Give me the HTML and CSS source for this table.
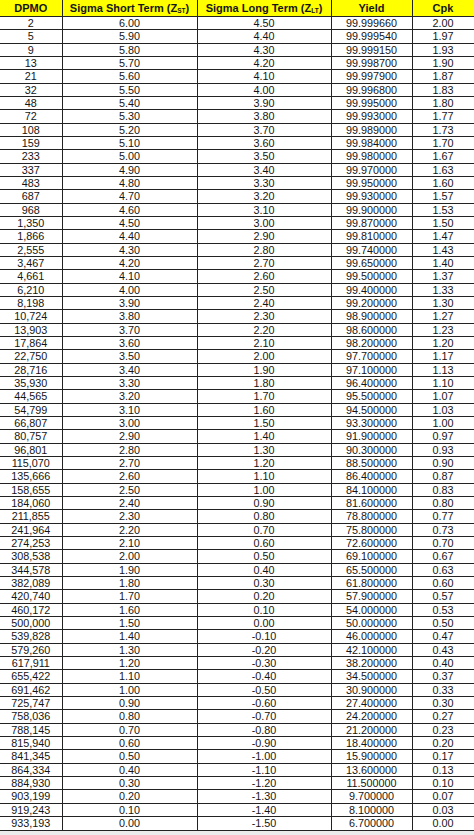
FILE: index.html
```html
<!DOCTYPE html>
<html>
<head>
<meta charset="utf-8">
<link rel="stylesheet" href="styles.css">
</head>
<body>
<table class="sigma">
<colgroup>
<col class="c-dpmo"><col class="c-st"><col class="c-lt"><col class="c-yield"><col class="c-cpk">
</colgroup>
<thead>
<tr><th>DPMO</th><th>Sigma Short Term (Z<sub>ST</sub>)</th><th>Sigma Long Term (Z<sub>LT</sub>)</th><th>Yield</th><th>Cpk</th></tr>
</thead>
<tbody>
<tr><td>2</td><td>6.00</td><td>4.50</td><td>99.999660</td><td>2.00</td></tr>
<tr><td>5</td><td>5.90</td><td>4.40</td><td>99.999540</td><td>1.97</td></tr>
<tr><td>9</td><td>5.80</td><td>4.30</td><td>99.999150</td><td>1.93</td></tr>
<tr><td>13</td><td>5.70</td><td>4.20</td><td>99.998700</td><td>1.90</td></tr>
<tr><td>21</td><td>5.60</td><td>4.10</td><td>99.997900</td><td>1.87</td></tr>
<tr><td>32</td><td>5.50</td><td>4.00</td><td>99.996800</td><td>1.83</td></tr>
<tr><td>48</td><td>5.40</td><td>3.90</td><td>99.995000</td><td>1.80</td></tr>
<tr><td>72</td><td>5.30</td><td>3.80</td><td>99.993000</td><td>1.77</td></tr>
<tr><td>108</td><td>5.20</td><td>3.70</td><td>99.989000</td><td>1.73</td></tr>
<tr><td>159</td><td>5.10</td><td>3.60</td><td>99.984000</td><td>1.70</td></tr>
<tr><td>233</td><td>5.00</td><td>3.50</td><td>99.980000</td><td>1.67</td></tr>
<tr><td>337</td><td>4.90</td><td>3.40</td><td>99.970000</td><td>1.63</td></tr>
<tr><td>483</td><td>4.80</td><td>3.30</td><td>99.950000</td><td>1.60</td></tr>
<tr><td>687</td><td>4.70</td><td>3.20</td><td>99.930000</td><td>1.57</td></tr>
<tr><td>968</td><td>4.60</td><td>3.10</td><td>99.900000</td><td>1.53</td></tr>
<tr><td>1,350</td><td>4.50</td><td>3.00</td><td>99.870000</td><td>1.50</td></tr>
<tr><td>1,866</td><td>4.40</td><td>2.90</td><td>99.810000</td><td>1.47</td></tr>
<tr><td>2,555</td><td>4.30</td><td>2.80</td><td>99.740000</td><td>1.43</td></tr>
<tr><td>3,467</td><td>4.20</td><td>2.70</td><td>99.650000</td><td>1.40</td></tr>
<tr><td>4,661</td><td>4.10</td><td>2.60</td><td>99.500000</td><td>1.37</td></tr>
<tr><td>6,210</td><td>4.00</td><td>2.50</td><td>99.400000</td><td>1.33</td></tr>
<tr><td>8,198</td><td>3.90</td><td>2.40</td><td>99.200000</td><td>1.30</td></tr>
<tr><td>10,724</td><td>3.80</td><td>2.30</td><td>98.900000</td><td>1.27</td></tr>
<tr><td>13,903</td><td>3.70</td><td>2.20</td><td>98.600000</td><td>1.23</td></tr>
<tr><td>17,864</td><td>3.60</td><td>2.10</td><td>98.200000</td><td>1.20</td></tr>
<tr><td>22,750</td><td>3.50</td><td>2.00</td><td>97.700000</td><td>1.17</td></tr>
<tr><td>28,716</td><td>3.40</td><td>1.90</td><td>97.100000</td><td>1.13</td></tr>
<tr><td>35,930</td><td>3.30</td><td>1.80</td><td>96.400000</td><td>1.10</td></tr>
<tr><td>44,565</td><td>3.20</td><td>1.70</td><td>95.500000</td><td>1.07</td></tr>
<tr><td>54,799</td><td>3.10</td><td>1.60</td><td>94.500000</td><td>1.03</td></tr>
<tr><td>66,807</td><td>3.00</td><td>1.50</td><td>93.300000</td><td>1.00</td></tr>
<tr><td>80,757</td><td>2.90</td><td>1.40</td><td>91.900000</td><td>0.97</td></tr>
<tr><td>96,801</td><td>2.80</td><td>1.30</td><td>90.300000</td><td>0.93</td></tr>
<tr><td>115,070</td><td>2.70</td><td>1.20</td><td>88.500000</td><td>0.90</td></tr>
<tr><td>135,666</td><td>2.60</td><td>1.10</td><td>86.400000</td><td>0.87</td></tr>
<tr><td>158,655</td><td>2.50</td><td>1.00</td><td>84.100000</td><td>0.83</td></tr>
<tr><td>184,060</td><td>2.40</td><td>0.90</td><td>81.600000</td><td>0.80</td></tr>
<tr><td>211,855</td><td>2.30</td><td>0.80</td><td>78.800000</td><td>0.77</td></tr>
<tr><td>241,964</td><td>2.20</td><td>0.70</td><td>75.800000</td><td>0.73</td></tr>
<tr><td>274,253</td><td>2.10</td><td>0.60</td><td>72.600000</td><td>0.70</td></tr>
<tr><td>308,538</td><td>2.00</td><td>0.50</td><td>69.100000</td><td>0.67</td></tr>
<tr><td>344,578</td><td>1.90</td><td>0.40</td><td>65.500000</td><td>0.63</td></tr>
<tr><td>382,089</td><td>1.80</td><td>0.30</td><td>61.800000</td><td>0.60</td></tr>
<tr><td>420,740</td><td>1.70</td><td>0.20</td><td>57.900000</td><td>0.57</td></tr>
<tr><td>460,172</td><td>1.60</td><td>0.10</td><td>54.000000</td><td>0.53</td></tr>
<tr><td>500,000</td><td>1.50</td><td>0.00</td><td>50.000000</td><td>0.50</td></tr>
<tr><td>539,828</td><td>1.40</td><td>-0.10</td><td>46.000000</td><td>0.47</td></tr>
<tr><td>579,260</td><td>1.30</td><td>-0.20</td><td>42.100000</td><td>0.43</td></tr>
<tr><td>617,911</td><td>1.20</td><td>-0.30</td><td>38.200000</td><td>0.40</td></tr>
<tr><td>655,422</td><td>1.10</td><td>-0.40</td><td>34.500000</td><td>0.37</td></tr>
<tr><td>691,462</td><td>1.00</td><td>-0.50</td><td>30.900000</td><td>0.33</td></tr>
<tr><td>725,747</td><td>0.90</td><td>-0.60</td><td>27.400000</td><td>0.30</td></tr>
<tr><td>758,036</td><td>0.80</td><td>-0.70</td><td>24.200000</td><td>0.27</td></tr>
<tr><td>788,145</td><td>0.70</td><td>-0.80</td><td>21.200000</td><td>0.23</td></tr>
<tr><td>815,940</td><td>0.60</td><td>-0.90</td><td>18.400000</td><td>0.20</td></tr>
<tr><td>841,345</td><td>0.50</td><td>-1.00</td><td>15.900000</td><td>0.17</td></tr>
<tr><td>864,334</td><td>0.40</td><td>-1.10</td><td>13.600000</td><td>0.13</td></tr>
<tr><td>884,930</td><td>0.30</td><td>-1.20</td><td>11.500000</td><td>0.10</td></tr>
<tr><td>903,199</td><td>0.20</td><td>-1.30</td><td>9.700000</td><td>0.07</td></tr>
<tr><td>919,243</td><td>0.10</td><td>-1.40</td><td>8.100000</td><td>0.03</td></tr>
<tr><td>933,193</td><td>0.00</td><td>-1.50</td><td>6.700000</td><td>0.00</td></tr>
</tbody>
</table>
</body>
</html>
```
FILE: styles.css
```css
html, body {
  margin: 0;
  padding: 0;
  background: #ececec;
}
body {
  width: 474px;
  height: 835px;
  overflow: hidden;
  font-family: "Liberation Sans", Arial, sans-serif;
}
.sigma {
  border-collapse: collapse;
  table-layout: fixed;
  width: 474px;
  background: #fff;
  color: #151515;
}
.c-dpmo { width: 62px; }
.c-st { width: 135px; }
.c-lt { width: 134px; }
.c-yield { width: 81px; }
.c-cpk { width: 62px; }
.sigma th, .sigma td {
  padding: 0;
  text-align: center;
  white-space: nowrap;
  overflow: hidden;
  line-height: 1;
}
.sigma th {
  height: 16px;
  background: #ffff00;
  font-size: 11px;
  font-weight: bold;
  border-right: 1px solid #222;
  border-bottom: 1px solid #222;
}
.sigma th sub {
  font-size: 6.5px;
  vertical-align: -1px;
  line-height: 0;
}
.sigma td {
  height: 12px;
  font-size: 10.8px;
  border-right: 1px solid #222;
  border-bottom: 1px solid #222;
}
.sigma tbody tr:nth-child(3n+2) td,
.sigma tbody tr:last-child td {
  height: 13px;
}
.sigma th:last-child, .sigma td:last-child {
  border-right: 1px solid #d0d0d0;
}
```
